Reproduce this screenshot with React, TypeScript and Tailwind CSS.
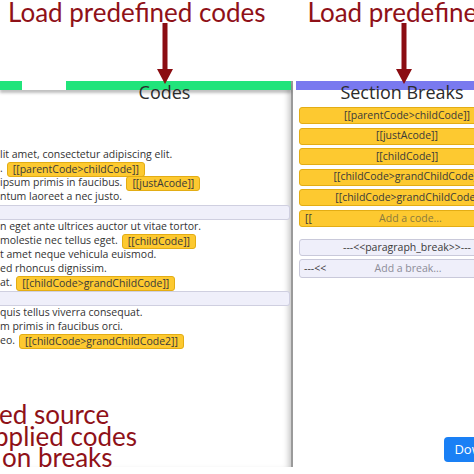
import React from "react";

type Piece = { text: string; code?: string };

// each editor line: leading sentence text + optional code chip
const paragraphs: Piece[][] = [
  [
    { text: "lit amet, consectetur adipiscing elit." },
    { text: ".", code: "[[parentCode>childCode]]" },
    { text: "ipsum primis in faucibus.", code: "[[justAcode]]" },
    { text: "ntum laoreet a nec justo." },
  ],
  [
    { text: "n eget ante ultrices auctor ut vitae tortor." },
    { text: "molestie nec tellus eget.", code: "[[childCode]]" },
    { text: "t amet neque vehicula euismod." },
    { text: "ed rhoncus dignissim." },
    { text: "at.", code: "[[childCode>grandChildCode]]" },
  ],
  [
    { text: "quis tellus viverra consequat." },
    { text: "m primis in faucibus orci." },
    { text: "eo.", code: "[[childCode>grandChildCode2]]" },
  ],
];

const codes = [
  "[[parentCode>childCode]]",
  "[[justAcode]]",
  "[[childCode]]",
  "[[childCode>grandChildCode]]",
  "[[childCode>grandChildCode-",
];

const uiFont = { fontFamily: '"Open Sans", "Noto Sans", sans-serif' };
const noteFont = { fontFamily: 'Lato, "Noto Sans", sans-serif' };

const Arrow = () => (
  <svg width="16" height="62" viewBox="0 0 16 62" className="block">
    <rect x="5.5" y="0" width="5" height="48" fill="#8b0d12" />
    <polygon points="0,46 16,46 8,61" fill="#8b0d12" />
  </svg>
);

const Chip = ({ label }: { label: string }) => (
  <span className="ml-[4px] inline-block h-[15px] rounded-[3px] border border-[#e3ad14] bg-[#fdc930] px-[5px] leading-[13px] text-[#3a3a3a]">
    {label}
  </span>
);

export default function App() {
  return (
    <div className="relative h-[474px] w-[474px] overflow-hidden bg-white">
      {/* annotation strip */}
      <div className="relative h-[82px]" style={noteFont}>
        <div className="-mt-[1px] flex text-[26px] leading-[26px] text-[#8f1118]">
          <span className="ml-[8px] whitespace-nowrap">Load predefined codes</span>
          <span className="ml-[42px] whitespace-nowrap">Load predefined codes</span>
        </div>
        <div className="-mt-[2px] flex">
          <div className="ml-[157px]">
            <Arrow />
          </div>
          <div className="ml-[223px]">
            <Arrow />
          </div>
        </div>
      </div>

      <div className="flex" style={uiFont}>
        {/* codes editor */}
        <div className="flex h-[386px] w-[293px] shrink-0 flex-col border-r-[2px] border-[#9a9a9a] shadow-[inset_-6px_0_6px_-4px_rgba(0,0,0,0.25)]">
          <div className="flex h-[9px] shrink-0 shadow-[0_3px_3px_rgba(0,0,0,0.25)]">
            <div className="w-[22px] bg-[#21e47b]" />
            <div className="w-[44px] bg-white" />
            <div className="flex-1 bg-[#21e47b]" />
          </div>
          <div className="-mt-[8px] pl-[38px] text-center text-[18px] leading-[20px] text-[#2b2b2b]">Codes</div>

          <div className="mt-[46px] flex flex-col text-[10.5px] text-[#333]">
            {paragraphs.map((para, i) => (
              <div key={i} className="flex flex-col">
                {para.map((line, j) => (
                  <div key={j} className="flex h-[14px] items-center whitespace-nowrap">
                    <span>{line.text}</span>
                    {line.code && <Chip label={line.code} />}
                  </div>
                ))}
                {i < paragraphs.length - 1 && (
                  <div className="my-[0.5px] h-[15px] w-[290px] rounded-r-[3px] border border-l-0 border-[#cfcfe0] bg-[#efeffa]" />
                )}
              </div>
            ))}
          </div>
        </div>

        {/* section break list */}
        <div className="ml-[3px] flex h-[386px] w-[234px] shrink-0 flex-col">
          <div className="h-[9px] bg-[#7979ef]" />
          <div className="-mt-[8px] pr-[22px] text-center text-[18px] leading-[20px] text-[#2b2b2b]">Section Breaks</div>

          <div className="mt-[5px] flex w-[219px] flex-col gap-[3.6px] pl-[3px] text-[10.5px]">
            {codes.map((c) => (
              <div
                key={c}
                className="flex h-[17px] items-center justify-center whitespace-nowrap rounded-[3px] border border-[#e3ad14] bg-[#fdc930] text-[#3a3a3a]"
              >
                {c}
              </div>
            ))}
            <div className="flex h-[17px] items-center rounded-[3px] border border-[#e3ad14] bg-[#fdc930] px-[5px]">
              <span className="text-[#3a3a3a]">[[</span>
              <span className="flex-1 text-center text-[#8a7a3e]">Add a code...</span>
            </div>
          </div>

          <div className="mt-[12px] flex w-[219px] flex-col gap-[3px] pl-[3px] text-[10.5px]">
            <div className="flex h-[17px] items-center justify-center rounded-[3px] border border-[#c9c9da] bg-[#efeffa] text-[#3a3a3a]">
              ---&lt;&lt;paragraph_break&gt;&gt;---
            </div>
            <div className="flex h-[19px] items-center rounded-[3px] border border-[#c9c9da] bg-[#efeffa] px-[4px]">
              <span className="text-[#3a3a3a]">---&lt;&lt;</span>
              <span className="flex-1 pr-[20px] text-center text-[#8c8c98]">Add a break...</span>
            </div>
          </div>

          <div className="mt-auto mb-[5px] flex justify-end pr-[4px]">
            <button className="h-[25px] rounded-[4px] bg-[#1a80f5] px-[10px] text-[13px] text-white">Download</button>
          </div>
        </div>
      </div>

      {/* lower annotation, laid over the editor */}
      <div
        className="absolute left-0 top-[404px] flex flex-col text-[26px] leading-[21.5px] text-[#8f1118]"
        style={noteFont}
      >
        <span className="-ml-[1px] whitespace-nowrap">ed source</span>
        <span className="-ml-[6px] whitespace-nowrap">pplied codes</span>
        <span className="ml-[2px] whitespace-nowrap">on breaks</span>
      </div>
    </div>
  );
}
